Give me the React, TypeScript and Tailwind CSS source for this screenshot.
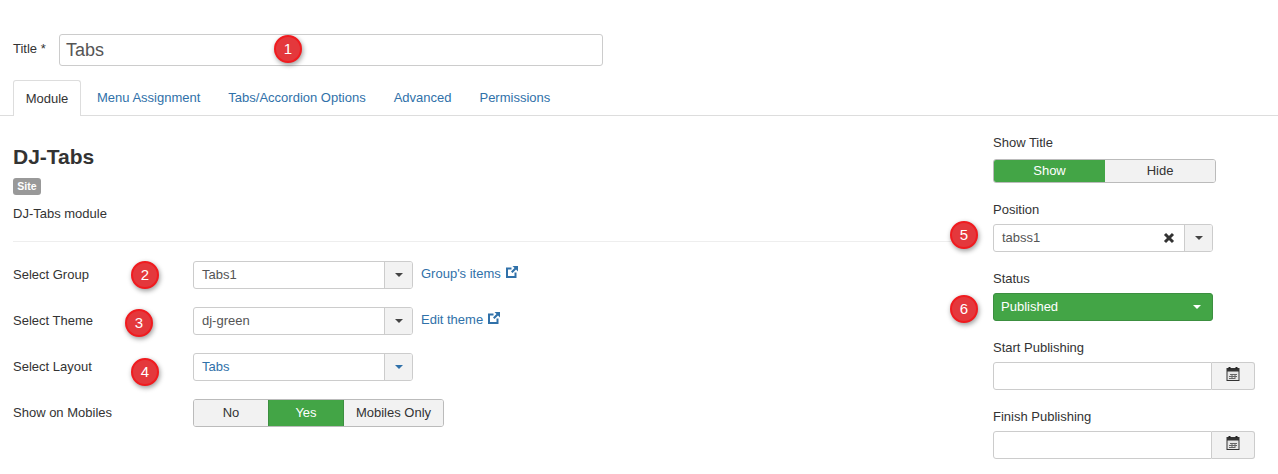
import React from "react";

const Num = ({ n, className }: { n: number; className: string }) => (
  <div className={`absolute flex h-[28px] w-[28px] items-center justify-center rounded-full border-2 border-[#f01b1f] bg-[#e4383c] text-[15px] text-white shadow-[1px_2px_5px_rgba(0,0,0,0.4)] ${className}`}>
    {n}
  </div>
);

const Caret = ({ color = "#444" }: { color?: string }) => (
  <svg width="8" height="4" viewBox="0 0 8 4"><path d="M0 0h8L4 4z" fill={color} /></svg>
);

const ExtLink = () => (
  <svg width="12" height="12" viewBox="0 0 12 12" className="ml-[5px] inline-block align-[0px]" fill="none">
    <path d="M5.5 2.5H1v8.5h8.5V6.5" stroke="#3071a9" strokeWidth="2" />
    <path d="M6.5 0h5.5v5.5L10 3.5 6.5 7 5 5.5 8.5 2z" fill="#3071a9" />
  </svg>
);

const Calendar = () => (
  <svg width="14" height="14" viewBox="0 0 14 14" className="-mt-[4px]">
    <path d="M0.5 1h13v13h-13z" fill="#333" />
    <path d="M2.5 0h2v2h-2zM9.5 0h2v2h-2z" fill="#222" />
    <path d="M1.5 4.5h11v8.5h-11z" fill="#e6e6e6" />
    <path d="M4 7h7v1H4zM3 9h8v1H3zM3 11h6v1H3zM5.5 7h1v5h-1zM8.5 7h1v5h-1z" fill="#666" />
  </svg>
);

const Select = ({ value, width = "w-[220px]", blue, clear }: { value: string; width?: string; blue?: boolean; clear?: boolean }) => (
  <div className={`flex h-[28px] ${width} overflow-hidden rounded-[3px] border border-[#ccc] bg-white`}>
    <div className={`flex flex-1 items-center justify-between pl-[8px] pr-[9px] ${blue ? "text-[#3071a9]" : "text-[#555]"}`}>
      <span>{value}</span>
      {clear && (
        <svg width="12" height="12" viewBox="0 0 12 12">
          <path d="M2 2l8 8M10 2l-8 8" stroke="#333" strokeWidth="3" />
        </svg>
      )}
    </div>
    <div className="flex w-[28px] items-center justify-center border-l border-[#ccc] bg-[#f2f2f2]">
      <Caret color={blue ? "#3071a9" : "#444"} />
    </div>
  </div>
);

const Row = ({ label, children }: { label: string; children: React.ReactNode }) => (
  <div className="flex h-[28px] items-center">
    <div className="w-[180px]">{label}</div>
    {children}
  </div>
);

const DateField = () => (
  <div className="flex h-[28px] w-[262px]">
    <div className="flex-1 rounded-l-[3px] border border-[#ccc] bg-white" />
    <div className="flex w-[43px] items-center justify-center rounded-r-[3px] border border-l-0 border-[#ccc] bg-[#f2f2f2]">
      <Calendar />
    </div>
  </div>
);

const Toggle = ({ text, on, w, cls = "" }: { text: string; on?: boolean; w: string; cls?: string }) => (
  <div className={`flex items-center justify-center ${w} ${cls} ${on ? "bg-[#43a546] text-white" : "bg-[#f2f2f2] text-[#333]"}`}>{text}</div>
);

export default function App() {
  return (
    <div className="relative h-[474px] w-[1278px] overflow-hidden bg-white font-['Liberation_Sans',Arial,sans-serif] text-[13px] text-[#333]">
      <div className="flex items-center pl-[13px] pt-[34px]">
        <div className="w-[46px] pb-[2px]">Title *</div>
        <div className="flex h-[32px] w-[544px] items-center rounded-[3px] border border-[#ccc] pl-[6px] text-[18px] text-[#555]">Tabs</div>
      </div>

      <div className="mt-[14px] flex h-[36px] border-b border-[#ddd] pl-[13px]">
        <div className="flex h-[36px] w-[68px] items-center justify-center rounded-t-[3px] border border-b-0 border-[#ddd] bg-white">Module</div>
        <div className="flex items-center text-[#3071a9]">
          <span className="ml-[16px]">Menu Assignment</span>
          <span className="ml-[28px]">Tabs/Accordion Options</span>
          <span className="ml-[28px]">Advanced</span>
          <span className="ml-[28px]">Permissions</span>
        </div>
      </div>

      <div className="flex pl-[13px]">
        <div className="w-[952px] pt-[29px]">
          <h2 className="text-[21px] font-bold leading-[24px]">DJ-Tabs</h2>
          <div className="mt-[9px] flex h-[17px] w-[28px] items-center justify-center rounded-[3px] bg-[#999] text-[10.5px] font-bold text-white">Site</div>
          <p className="mt-[10px] leading-[18px]">DJ-Tabs module</p>
          <div className="mb-[19px] mt-[18px] border-t border-[#eee]" />
          <div className="flex flex-col gap-[18px]">
            <Row label="Select Group">
              <Select value="Tabs1" />
              <a className="ml-[8px] -mt-[2px] text-[#3071a9]">Group's items<ExtLink /></a>
            </Row>
            <Row label="Select Theme">
              <Select value="dj-green" />
              <a className="ml-[8px] -mt-[2px] text-[#3071a9]">Edit theme<ExtLink /></a>
            </Row>
            <Row label="Select Layout">
              <Select value="Tabs" blue />
            </Row>
            <Row label="Show on Mobiles">
              <div className="flex h-[28px] overflow-hidden rounded-[3px] border border-[#bbb]">
                <Toggle text="No" w="w-[74px]" />
                <Toggle text="Yes" on w="w-[76px]" cls="border-x border-[#3c8f40]" />
                <Toggle text="Mobiles Only" w="w-[99px]" />
              </div>
            </Row>
          </div>
        </div>

        <div className="ml-[28px] pt-[19px]">
          <div className="leading-[16px]">Show Title</div>
          <div className="mt-[8px] flex h-[24px] w-[223px] overflow-hidden rounded-[3px] border border-[#bbb]">
            <Toggle text="Show" on w="w-[111px]" />
            <Toggle text="Hide" w="flex-1" />
          </div>
          <div className="mt-[19px] leading-[16px]">Position</div>
          <div className="mt-[6px]"><Select value="tabss1" clear /></div>
          <div className="mt-[19px] leading-[16px]">Status</div>
          <div className="mt-[6px] flex h-[28px] w-[220px] items-center justify-between rounded-[3px] border border-[#3c8f40] bg-[#43a546] px-[7px] pr-[11px] text-white">
            <span>Published</span>
            <Caret color="#fff" />
          </div>
          <div className="mt-[19px] leading-[16px]">Start Publishing</div>
          <div className="mt-[6px]"><DateField /></div>
          <div className="mt-[19px] leading-[16px]">Finish Publishing</div>
          <div className="mt-[6px]"><DateField /></div>
        </div>
      </div>

      <Num n={1} className="left-[274px] top-[35px]" />
      <Num n={2} className="left-[131px] top-[261px]" />
      <Num n={3} className="left-[125px] top-[309px]" />
      <Num n={4} className="left-[131px] top-[358px]" />
      <Num n={5} className="left-[950px] top-[221px]" />
      <Num n={6} className="left-[950px] top-[295px]" />
    </div>
  );
}
